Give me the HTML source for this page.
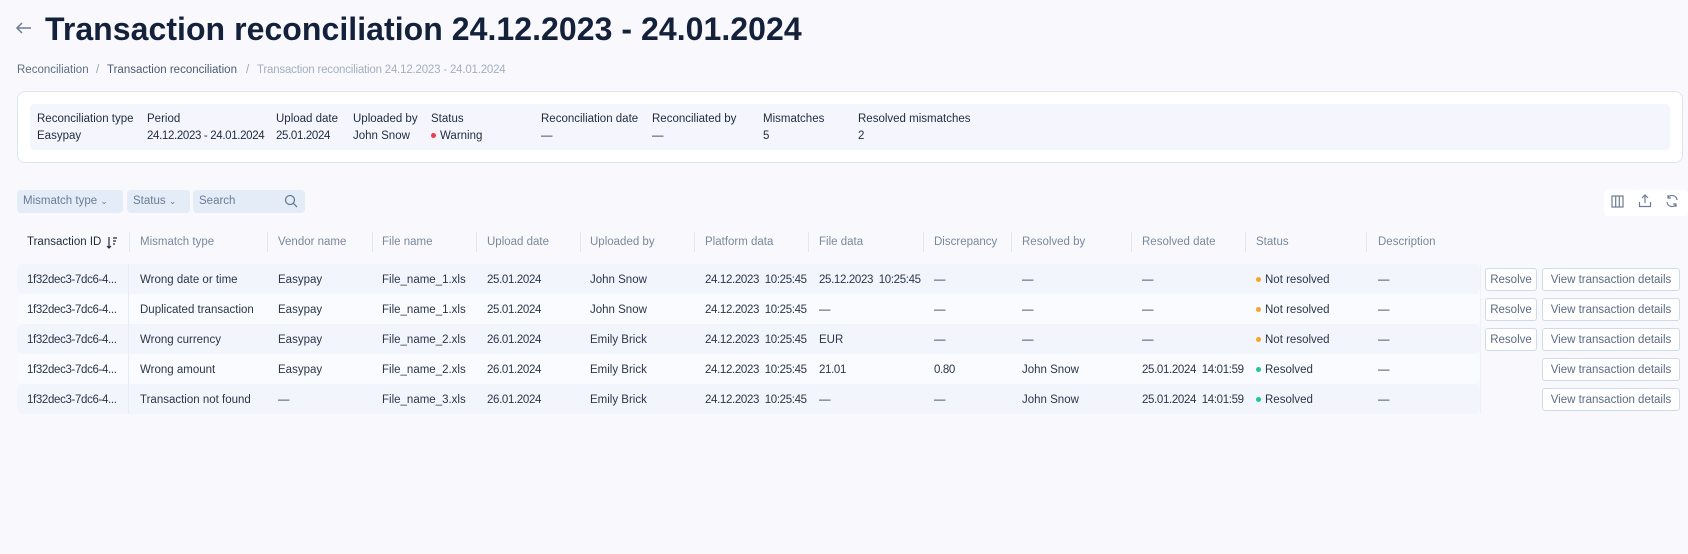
<!DOCTYPE html>
<html><head><meta charset="utf-8"><style>
*{box-sizing:border-box;margin:0;padding:0}
body{width:1688px;height:554px;background:#f9f9fd;font-family:"Liberation Sans",sans-serif;color:#1f2b3d;position:relative;overflow:hidden;font-size:11.5px}
.abs{position:absolute;white-space:nowrap}
h1{position:absolute;left:45px;top:11px;font-size:32px;font-weight:bold;color:#14213a;letter-spacing:0.05px}
.bc{top:64px;font-size:11.5px}
.card{left:17px;top:91px;width:1666px;height:72px;border:1px solid #dde6ef;border-radius:8px;background:#fff}
.panel{left:30px;top:104px;width:1640px;height:46px;background:#f5f6fd;border-radius:4px}
.lab{top:113px;font-size:11.5px;color:#1f2b3d}
.val{top:130px;font-size:11.5px;color:#1f2b3d}
.flt{top:190px;height:23px;background:#e4ecf7;border-radius:4px;color:#6a7c95;font-size:11.5px;padding:5px 0 0 6px}
.hd{top:236px;font-size:11.5px;color:#7a889c}
.sep{top:232px;width:1px;height:20px;background:#e2e8f0}
.row{left:17px;width:1463px;height:30px;border-radius:6px}
.cell{font-size:11.5px;color:#2a3649;margin-top:1px}
.n{letter-spacing:-0.35px}
.btn{height:23px;border:1px solid #cfdbe8;border-radius:3px;background:#fff;color:#5a6b82;font-size:11.5px;padding:5px 0 0;text-align:center}
.dot{display:inline-block;width:5px;height:5px;border-radius:50%;margin-right:4px;vertical-align:1px}
</style></head><body>
<svg class="abs" style="left:15px;top:21px" width="18" height="14" viewBox="0 0 18 14"><path d="M16 7H2M7 2L2 7l5 5" stroke="#6b7c94" stroke-width="1.5" fill="none"/></svg>
<h1>Transaction reconciliation 24.12.2023 - 24.01.2024</h1>
<div class="abs bc" style="left:17px;color:#5d6e86">Reconciliation</div>
<div class="abs bc" style="left:96px;color:#9aa6b6">/</div>
<div class="abs bc" style="left:107px;color:#4b5b72">Transaction reconciliation</div>
<div class="abs bc" style="left:246px;color:#9aa6b6">/</div>
<div class="abs bc" style="left:257px;color:#a3afc0;letter-spacing:-0.2px">Transaction reconciliation 24.12.2023 - 24.01.2024</div>

<div class="abs card"></div>
<div class="abs panel"></div>
<div class="abs lab" style="left:37px">Reconciliation type</div><div class="abs val" style="left:37px">Easypay</div>
<div class="abs lab" style="left:147px">Period</div><div class="abs val n" style="left:147px">24.12.2023 - 24.01.2024</div>
<div class="abs lab" style="left:276px">Upload date</div><div class="abs val n" style="left:276px">25.01.2024</div>
<div class="abs lab" style="left:353px">Uploaded by</div><div class="abs val" style="left:353px">John Snow</div>
<div class="abs lab" style="left:431px">Status</div><div class="abs val" style="left:431px"><span class="dot" style="background:#ef3b4a"></span>Warning</div>
<div class="abs lab" style="left:541px">Reconciliation date</div><div class="abs val" style="left:541px">—</div>
<div class="abs lab" style="left:652px">Reconciliated by</div><div class="abs val" style="left:652px">—</div>
<div class="abs lab" style="left:763px">Mismatches</div><div class="abs val" style="left:763px">5</div>
<div class="abs lab" style="left:858px">Resolved mismatches</div><div class="abs val" style="left:858px">2</div>

<div class="abs flt" style="left:17px;width:106px">Mismatch type <span style="font-size:9px">&#8964;</span></div>
<div class="abs flt" style="left:127px;width:63px">Status <span style="font-size:9px">&#8964;</span></div>
<div class="abs flt" style="left:193px;width:112px">Search</div>
<svg class="abs" style="left:284px;top:194px" width="14" height="14" viewBox="0 0 14 14"><circle cx="6" cy="6" r="4.5" stroke="#6a7c95" stroke-width="1.3" fill="none"/><path d="M9.3 9.3L13 13" stroke="#6a7c95" stroke-width="1.3"/></svg>

<div class="abs" style="left:1604px;top:190px;width:84px;height:26px;background:#fff;border-radius:4px"></div>
<svg class="abs" style="left:1611px;top:195px" width="13" height="13" viewBox="0 0 13 13"><rect x="1" y="1" width="11" height="11" stroke="#6b7c94" fill="none" stroke-width="1.2"/><path d="M4.7 1v11M8.3 1v11" stroke="#6b7c94" stroke-width="1.2"/></svg>
<svg class="abs" style="left:1638px;top:194px" width="14" height="14" viewBox="0 0 14 14"><path d="M7 9V1.5M4 4l3-3 3 3M1.5 8v4.5h11V8" stroke="#6b7c94" stroke-width="1.2" fill="none"/></svg>
<svg class="abs" style="left:1665px;top:194px" width="14" height="14" viewBox="0 0 14 14"><path d="M12 6A5 5 0 0 0 3 3.5M2 8a5 5 0 0 0 9 2.5M3 1v3h3M11 13v-3H8" stroke="#6b7c94" stroke-width="1.2" fill="none"/></svg>

<div class="abs hd" style="left:27px;color:#1f2b3d">Transaction ID</div>
<svg class="abs" style="left:106px;top:236px" width="12" height="13" viewBox="0 0 12 13"><path d="M3 1v11M1 10l2 2 2-2M7 2h4M7 5h3M7 8h2" stroke="#1f2b3d" stroke-width="1.2" fill="none"/></svg>
<div class="abs sep" style="left:129px"></div>
<div class="abs hd" style="left:140px">Mismatch type</div><div class="abs sep" style="left:267px"></div>
<div class="abs hd" style="left:278px">Vendor name</div><div class="abs sep" style="left:372px"></div>
<div class="abs hd" style="left:382px">File name</div><div class="abs sep" style="left:476px"></div>
<div class="abs hd" style="left:487px">Upload date</div><div class="abs sep" style="left:580px"></div>
<div class="abs hd" style="left:590px">Uploaded by</div><div class="abs sep" style="left:694px"></div>
<div class="abs hd" style="left:705px">Platform data</div><div class="abs sep" style="left:808px"></div>
<div class="abs hd" style="left:819px">File data</div><div class="abs sep" style="left:923px"></div>
<div class="abs hd" style="left:934px">Discrepancy</div><div class="abs sep" style="left:1011px"></div>
<div class="abs hd" style="left:1022px">Resolved by</div><div class="abs sep" style="left:1131px"></div>
<div class="abs hd" style="left:1142px">Resolved date</div><div class="abs sep" style="left:1245px"></div>
<div class="abs hd" style="left:1256px">Status</div><div class="abs sep" style="left:1366px"></div>
<div class="abs hd" style="left:1378px">Description</div>

<div class="abs row" style="top:264px;background:#f3f5fc"></div>
<div class="abs row" style="top:294px;background:#fafbfe"></div>
<div class="abs row" style="top:324px;background:#f3f5fc"></div>
<div class="abs row" style="top:354px;background:#fafbfe"></div>
<div class="abs row" style="top:384px;background:#f3f5fc"></div>
<div class="abs" style="left:128px;top:264px;width:1px;height:150px;background:#e6ecf6"></div>
<div class="abs" style="left:1480px;top:264px;width:1px;height:150px;background:#eef1f8"></div>

<div class="abs cell n" style="left:27px;top:273px">1f32dec3-7dc6-4...</div><div class="abs cell" style="left:140px;top:273px">Wrong date or time</div><div class="abs cell" style="left:278px;top:273px">Easypay</div><div class="abs cell" style="left:382px;top:273px">File_name_1.xls</div><div class="abs cell n" style="left:487px;top:273px">25.01.2024</div><div class="abs cell" style="left:590px;top:273px">John Snow</div><div class="abs cell n" style="left:705px;top:273px">24.12.2023&nbsp; 10:25:45</div><div class="abs cell n" style="left:819px;top:273px">25.12.2023&nbsp; 10:25:45</div><div class="abs cell" style="left:934px;top:273px">—</div><div class="abs cell" style="left:1022px;top:273px">—</div><div class="abs cell" style="left:1142px;top:273px">—</div><div class="abs cell" style="left:1256px;top:273px"><span class="dot" style="background:#f5a623"></span>Not resolved</div><div class="abs cell" style="left:1378px;top:273px">—</div>

<div class="abs cell n" style="left:27px;top:303px">1f32dec3-7dc6-4...</div><div class="abs cell" style="left:140px;top:303px">Duplicated transaction</div><div class="abs cell" style="left:278px;top:303px">Easypay</div><div class="abs cell" style="left:382px;top:303px">File_name_1.xls</div><div class="abs cell n" style="left:487px;top:303px">25.01.2024</div><div class="abs cell" style="left:590px;top:303px">John Snow</div><div class="abs cell n" style="left:705px;top:303px">24.12.2023&nbsp; 10:25:45</div><div class="abs cell" style="left:819px;top:303px">—</div><div class="abs cell" style="left:934px;top:303px">—</div><div class="abs cell" style="left:1022px;top:303px">—</div><div class="abs cell" style="left:1142px;top:303px">—</div><div class="abs cell" style="left:1256px;top:303px"><span class="dot" style="background:#f5a623"></span>Not resolved</div><div class="abs cell" style="left:1378px;top:303px">—</div>

<div class="abs cell n" style="left:27px;top:333px">1f32dec3-7dc6-4...</div><div class="abs cell" style="left:140px;top:333px">Wrong currency</div><div class="abs cell" style="left:278px;top:333px">Easypay</div><div class="abs cell" style="left:382px;top:333px">File_name_2.xls</div><div class="abs cell n" style="left:487px;top:333px">26.01.2024</div><div class="abs cell" style="left:590px;top:333px">Emily Brick</div><div class="abs cell n" style="left:705px;top:333px">24.12.2023&nbsp; 10:25:45</div><div class="abs cell" style="left:819px;top:333px">EUR</div><div class="abs cell" style="left:934px;top:333px">—</div><div class="abs cell" style="left:1022px;top:333px">—</div><div class="abs cell" style="left:1142px;top:333px">—</div><div class="abs cell" style="left:1256px;top:333px"><span class="dot" style="background:#f5a623"></span>Not resolved</div><div class="abs cell" style="left:1378px;top:333px">—</div>

<div class="abs cell n" style="left:27px;top:363px">1f32dec3-7dc6-4...</div><div class="abs cell" style="left:140px;top:363px">Wrong amount</div><div class="abs cell" style="left:278px;top:363px">Easypay</div><div class="abs cell" style="left:382px;top:363px">File_name_2.xls</div><div class="abs cell n" style="left:487px;top:363px">26.01.2024</div><div class="abs cell" style="left:590px;top:363px">Emily Brick</div><div class="abs cell n" style="left:705px;top:363px">24.12.2023&nbsp; 10:25:45</div><div class="abs cell n" style="left:819px;top:363px">21.01</div><div class="abs cell n" style="left:934px;top:363px">0.80</div><div class="abs cell" style="left:1022px;top:363px">John Snow</div><div class="abs cell n" style="left:1142px;top:363px">25.01.2024&nbsp; 14:01:59</div><div class="abs cell" style="left:1256px;top:363px"><span class="dot" style="background:#1cc79a"></span>Resolved</div><div class="abs cell" style="left:1378px;top:363px">—</div>

<div class="abs cell n" style="left:27px;top:393px">1f32dec3-7dc6-4...</div><div class="abs cell" style="left:140px;top:393px">Transaction not found</div><div class="abs cell" style="left:278px;top:393px">—</div><div class="abs cell" style="left:382px;top:393px">File_name_3.xls</div><div class="abs cell n" style="left:487px;top:393px">26.01.2024</div><div class="abs cell" style="left:590px;top:393px">Emily Brick</div><div class="abs cell n" style="left:705px;top:393px">24.12.2023&nbsp; 10:25:45</div><div class="abs cell" style="left:819px;top:393px">—</div><div class="abs cell" style="left:934px;top:393px">—</div><div class="abs cell" style="left:1022px;top:393px">John Snow</div><div class="abs cell n" style="left:1142px;top:393px">25.01.2024&nbsp; 14:01:59</div><div class="abs cell" style="left:1256px;top:393px"><span class="dot" style="background:#1cc79a"></span>Resolved</div><div class="abs cell" style="left:1378px;top:393px">—</div>

<div class="abs btn" style="left:1485px;top:268px;width:52px">Resolve</div><div class="abs btn" style="left:1542px;top:268px;width:138px">View transaction details</div>
<div class="abs btn" style="left:1485px;top:298px;width:52px">Resolve</div><div class="abs btn" style="left:1542px;top:298px;width:138px">View transaction details</div>
<div class="abs btn" style="left:1485px;top:328px;width:52px">Resolve</div><div class="abs btn" style="left:1542px;top:328px;width:138px">View transaction details</div>
<div class="abs btn" style="left:1542px;top:358px;width:138px">View transaction details</div>
<div class="abs btn" style="left:1542px;top:388px;width:138px">View transaction details</div>
</body></html>
